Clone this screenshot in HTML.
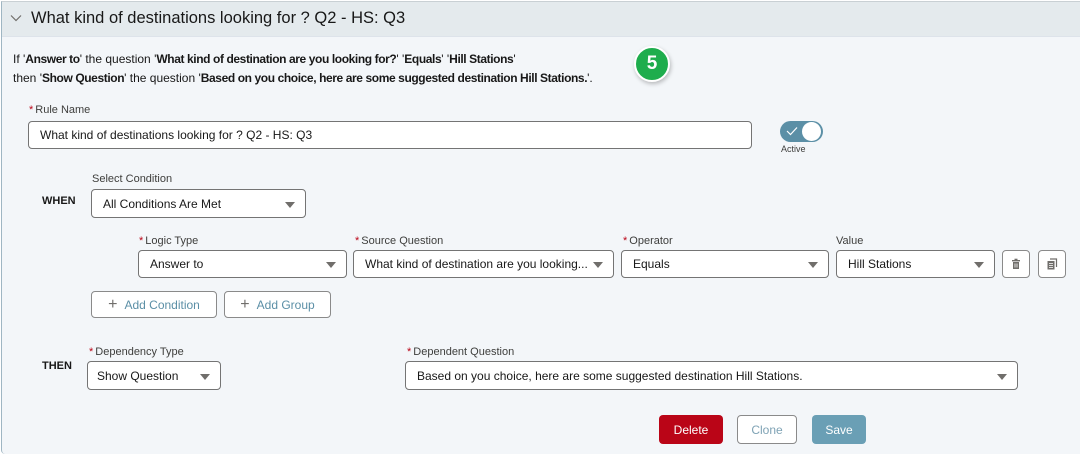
<!DOCTYPE html>
<html><head><meta charset="utf-8"><style>
*{box-sizing:border-box;margin:0;padding:0}
body{width:1080px;height:455px;background:#fff;font-family:"Liberation Sans",sans-serif;color:#181818;position:relative;overflow:hidden}
.frame{position:absolute;left:1px;top:1px;width:1079px;height:453px;background:#f3f6f9;border-left:1px solid #9fb6c3;border-top:1px solid #c9d0d4;border-bottom-left-radius:4px}
.hdr{position:absolute;left:0;top:0;width:100%;height:35px;background:#e4eaed;border-bottom:1px solid #dde3ea}
.abs{position:absolute}
.t{position:absolute;white-space:nowrap}
.sum b{letter-spacing:-0.4px}
.lbl{position:absolute;font-size:11px;color:#3e3e3c;white-space:nowrap}
.lbl b{color:#ba0517;font-weight:normal;margin-right:2px}
.box{position:absolute;background:#fff;border:1px solid #747474;border-radius:4px;font-size:12px;color:#181818;padding-left:11px;display:flex;align-items:center;white-space:nowrap;overflow:hidden}
.arr{position:absolute;right:10px;top:50%;margin-top:-2px;width:0;height:0;border-left:5px solid transparent;border-right:5px solid transparent;border-top:6px solid #706e6b}
.btn{position:absolute;border-radius:4px;font-size:12px;display:flex;align-items:center;justify-content:center}
.bold{font-weight:bold;font-size:11px;color:#181818}
</style></head><body>
<div class="frame">
  <div class="hdr"></div>
</div>
<svg class="abs" style="left:10px;top:14px" width="12" height="8" viewBox="0 0 12 8"><path d="M1 1.5 L6 6.5 L11 1.5" fill="none" stroke="#706e6b" stroke-width="1.2"/></svg>
<div class="t" style="left:31px;top:9px;font-size:16.5px;color:#181818">What kind of destinations looking for ? Q2 - HS: Q3</div>

<div class="t sum" style="left:13px;top:52px;font-size:12px">If '<b>Answer to</b>' the question '<b>What kind of destination are you looking for?</b>' '<b>Equals</b>' '<b>Hill Stations</b>'</div>
<div class="t sum" style="left:13px;top:71px;font-size:12px">then '<b>Show Question</b>' the question '<b>Based on you choice, here are some suggested destination Hill Stations.</b>'.</div>

<div class="abs" style="left:634px;top:46px;width:36px;height:36px;border-radius:50%;background:#1ead4d;border:2px solid #fff;box-shadow:1px 2px 4px rgba(0,0,0,.25);color:#fff;font-weight:bold;font-size:19px;display:flex;align-items:center;justify-content:center">5</div>

<div class="lbl" style="left:29px;top:104px"><b>*</b>Rule Name</div>
<div class="box" style="left:28px;top:121px;width:724px;height:28px">What kind of destinations looking for ? Q2 - HS: Q3</div>

<div class="abs" style="left:780px;top:121px;width:43px;height:21px;border-radius:11px;background:#5b8fa6"></div>
<div class="abs" style="left:802px;top:122px;width:19px;height:19px;border-radius:50%;background:#fff"></div>
<svg class="abs" style="left:786px;top:126px" width="12" height="10" viewBox="0 0 12 10"><path d="M1 5 L4.5 8.5 L11 1.5" fill="none" stroke="#fff" stroke-width="1.2"/></svg>
<div class="t" style="left:781px;top:144px;font-size:9px;color:#3e3e3c">Active</div>

<div class="t bold" style="left:42px;top:195px">WHEN</div>
<div class="lbl" style="left:92px;top:173px">Select Condition</div>
<div class="box" style="left:91px;top:189px;width:215px;height:29px">All Conditions Are Met<span class="arr"></span></div>

<div class="lbl" style="left:139px;top:235px"><b>*</b>Logic Type</div>
<div class="box" style="left:138px;top:250px;width:209px;height:28px">Answer to<span class="arr"></span></div>
<div class="lbl" style="left:355px;top:235px"><b>*</b>Source Question</div>
<div class="box" style="left:353px;top:250px;width:261px;height:28px">What kind of destination are you looking...<span class="arr"></span></div>
<div class="lbl" style="left:623px;top:235px"><b>*</b>Operator</div>
<div class="box" style="left:621px;top:250px;width:208px;height:28px">Equals<span class="arr"></span></div>
<div class="lbl" style="left:836px;top:235px">Value</div>
<div class="box" style="left:836px;top:250px;width:159px;height:28px">Hill Stations<span class="arr"></span></div>
<div class="btn" style="left:1002px;top:250px;width:28px;height:28px;background:#fff;border:1px solid #8a8a8a">
<svg width="12" height="12" viewBox="0 0 12 12"><rect x="2" y="2" width="8" height="1.4" fill="#706e6b"/><rect x="4.5" y="0.7" width="3" height="1.5" fill="#706e6b"/><path d="M3 4 H9 V11 H3 Z" fill="#706e6b"/><path d="M5 5.5 V9.5 M7 5.5 V9.5" stroke="#fff" stroke-width=".8"/></svg></div>
<div class="btn" style="left:1038px;top:250px;width:28px;height:28px;background:#fff;border:1px solid #8a8a8a">
<svg width="12" height="12" viewBox="0 0 12 12"><path d="M4 1 H10.5 V9" fill="none" stroke="#706e6b" stroke-width="1.2"/><rect x="1.5" y="3" width="7" height="8.5" fill="#706e6b"/><path d="M3 5.5 H7 M3 7.5 H7 M3 9.5 H7" stroke="#fff" stroke-width=".8"/></svg></div>

<div class="btn" style="left:91px;top:291px;width:126px;height:27px;background:#fff;border:1px solid #8a8a8a;color:#5b8fa6"><span style="font-size:16px;color:#706e6b;margin-right:7px;font-weight:300">+</span>Add Condition</div>
<div class="btn" style="left:224px;top:291px;width:107px;height:27px;background:#fff;border:1px solid #8a8a8a;color:#5b8fa6"><span style="font-size:16px;color:#706e6b;margin-right:7px;font-weight:300">+</span>Add Group</div>

<div class="t bold" style="left:42px;top:360px">THEN</div>
<div class="lbl" style="left:89px;top:346px"><b>*</b>Dependency Type</div>
<div class="box" style="left:87px;top:361px;width:134px;height:29px;padding-left:9px">Show Question<span class="arr"></span></div>
<div class="lbl" style="left:407px;top:346px"><b>*</b>Dependent Question</div>
<div class="box" style="left:405px;top:361px;width:613px;height:29px">Based on you choice, here are some suggested destination Hill Stations.<span class="arr"></span></div>

<div class="btn" style="left:659px;top:415px;width:64px;height:29px;background:#ba0517;color:#fff">Delete</div>
<div class="btn" style="left:737px;top:415px;width:60px;height:29px;background:#fff;border:1px solid #8a8a8a;color:#7fa3b5">Clone</div>
<div class="btn" style="left:812px;top:415px;width:54px;height:29px;background:#6a9fb5;color:#fff">Save</div>
</body></html>
